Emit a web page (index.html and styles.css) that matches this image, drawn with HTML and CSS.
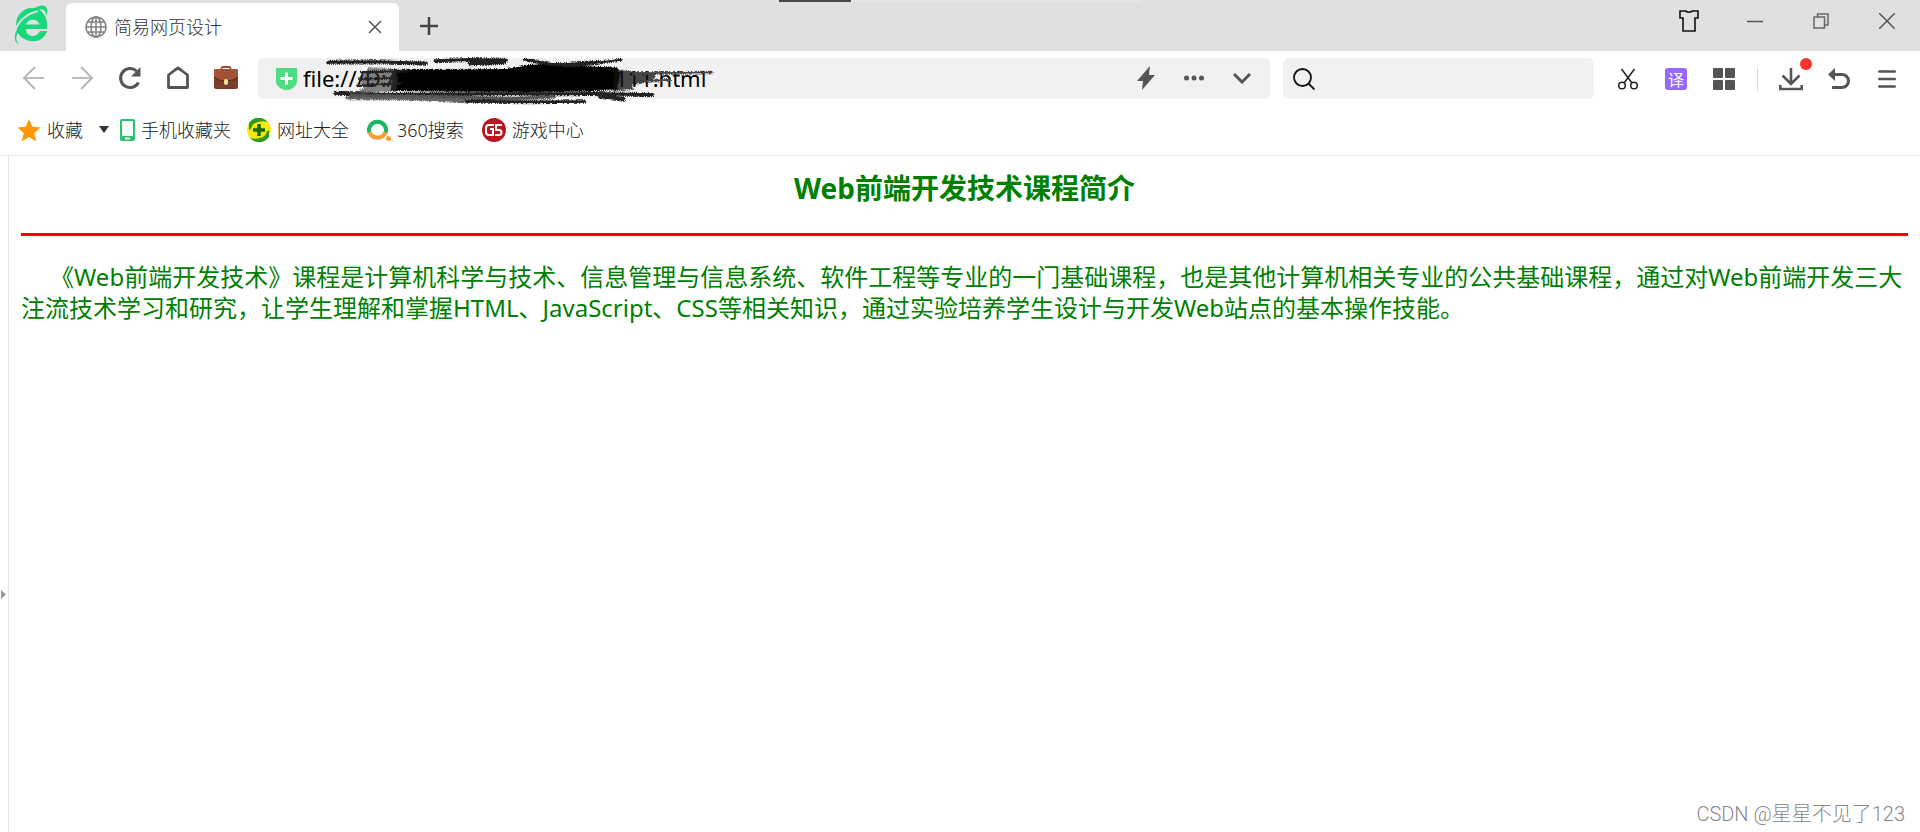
FILE: index.html
```html
<!DOCTYPE html>
<html lang="zh-CN">
<head>
    <meta charset="UTF-8">
    <meta name="viewport" content="width=device-width, initial-scale=1.0">
    <title>简易网页设计</title>
    <link rel="stylesheet" href="styles.css">
</head>
<body>
    <header class="browser">
        <div class="tab-strip">
            <div class="top-bar"><div class="top-bar-handle"></div></div>
            <svg class="logo" width="36" height="40" viewBox="0 0 36 40">
                <path d="M12 19.500 a7 6.500 0 0 1 13.500 0z M2 20 C2 8 12 2 19 3 C29 4 34 12 33 24 H12 C12 32 22 34 26 26 H33 C30 35 23 37 17 36 C8 35 2 29 2 20z" fill="#17d97c" fill-rule="evenodd"/>
                <path d="M1 26 C4 17 12 9 24 6" fill="none" stroke="#e0e0e0" stroke-width="2"/>
                <path d="M15 7 C23 0 32 -2 33 4 C34 7 33 9 32 10 C32 5 29 3 22 6z M6 24 C1 31 1 37 6 39 C0 39 0 32 2 26z" fill="#17d97c"/>
            </svg>
            <div class="tab">
                <svg width="22" height="22" viewBox="0 0 22 22" fill="none" stroke="#808080" stroke-width="1.500">
                    <circle cx="11" cy="11" r="10"/>
                    <ellipse cx="11" cy="11" rx="5" ry="10"/>
                    <path d="M11 1v20M1 11h20M3 6h16M3 16h16"/>
                </svg>
                <span class="tab-title">简易网页设计</span>
                <button class="icon-btn tab-close" aria-label="关闭标签页">
                    <svg width="14" height="14" viewBox="0 0 14 14" stroke="#555" stroke-width="1.500"><path d="M1 1l12 12M13 1L1 13"/></svg>
                </button>
            </div>
            <button class="icon-btn new-tab" aria-label="新建标签页">
                <svg width="18" height="18" viewBox="0 0 18 18" stroke="#444" stroke-width="2.500"><path d="M9 0v18M0 9h18"/></svg>
            </button>
            <div class="window-controls">
                <button class="icon-btn" aria-label="皮肤">
                    <svg width="20" height="22" viewBox="0 0 20 22" fill="none" stroke="#111" stroke-width="1.600"><path d="M1 1h5.500q3.500 2.500 7 0H19v7h-3v13H4V8H1z"/></svg>
                </button>
                <button class="icon-btn" aria-label="最小化">
                    <svg width="16" height="16" viewBox="0 0 16 16" stroke="#555" stroke-width="1.500"><path d="M0 8.500h16"/></svg>
                </button>
                <button class="icon-btn" aria-label="还原">
                    <svg width="16" height="16" viewBox="0 0 16 16" fill="none" stroke="#666" stroke-width="1.500"><path d="M1 4h10.500v11H1zM4.500 4V1H15v11h-3.500"/></svg>
                </button>
                <button class="icon-btn" aria-label="关闭">
                    <svg width="16" height="16" viewBox="0 0 16 16" stroke="#555" stroke-width="1.500"><path d="M0 0l16 16M16 0L0 16"/></svg>
                </button>
            </div>
        </div>

        <div class="toolbar">
            <nav class="nav-buttons">
                <button class="icon-btn" aria-label="后退">
                    <svg width="24" height="24" viewBox="0 0 24 24" fill="none" stroke="#bcbcbc" stroke-width="2.200"><path d="M22 12H2M13 1L2 12l11 11"/></svg>
                </button>
                <button class="icon-btn" aria-label="前进">
                    <svg width="24" height="24" viewBox="0 0 24 24" fill="none" stroke="#bcbcbc" stroke-width="2.200"><path d="M2 12h20M11 1l11 11-11 11"/></svg>
                </button>
                <button class="icon-btn" aria-label="刷新">
                    <svg width="24" height="24" viewBox="0 0 24 24" fill="none" stroke="#555" stroke-width="3"><path d="M20.500 16.500A9.500 9.500 0 1 1 18.500 5"/><path d="M22.500 1v9.500h-9.500z" fill="#555" stroke="none"/></svg>
                </button>
                <button class="icon-btn" aria-label="主页">
                    <svg width="24" height="24" viewBox="0 0 24 24" fill="none" stroke="#555" stroke-width="2.800" stroke-linejoin="round"><path d="M2.500 9L9 4l3-2 3 2 6.500 5v12.500h-19z"/></svg>
                </button>
                <button class="icon-btn" aria-label="工具箱">
                    <svg width="24" height="24" viewBox="0 0 24 24">
                        <path d="M7.500 4V2.500q0-1.500 1.500-1.500h6q1.500 0 1.500 1.500V4" fill="none" stroke="#a04c2b" stroke-width="1.800"/>
                        <rect y="3" width="24" height="20" rx="2" fill="#7b3d29"/>
                        <path d="M0 5q0-2 2-2h20q2 0 2 2v6q-4 4-12 4T0 11z" fill="#a35235"/>
                        <path d="M0 11q4 4 12 4t12-4" fill="none" stroke="#552616"/>
                        <rect x="10" y="13" width="4" height="6" rx="2" fill="#f5dca0"/>
                    </svg>
                </button>
            </nav>

            <div class="address-bar">
                <svg width="21" height="22" viewBox="0 0 21 22"><path d="M0 0h21v13q0 5-5 7.500-5.500 3-11 0Q0 18 0 13z" fill="#4fdc84"/><path d="M10.500 4.500v12M4.500 10.500h12" stroke="#fff" stroke-width="3"/></svg>
                <input class="url" type="text" aria-label="地址" value="file:///D:/　　　　　　　　　　111.html">
                <button class="icon-btn" aria-label="极速模式">
                    <svg width="18" height="24" viewBox="0 0 18 24"><path d="M13 0L0 15h6l-1 9L18 9h-6z" fill="#555"/></svg>
                </button>
                <button class="icon-btn" aria-label="更多">
                    <svg width="20" height="20" viewBox="0 0 20 20" fill="#555"><circle cx="2.500" cy="10" r="2.500"/><circle cx="10" cy="10" r="2.500"/><circle cx="17.500" cy="10" r="2.500"/></svg>
                </button>
                <button class="icon-btn" aria-label="展开">
                    <svg width="18" height="12" viewBox="0 0 18 12" fill="none" stroke="#555" stroke-width="3"><path d="M1 2l8 8 8-8"/></svg>
                </button>
                <!-- pen strokes over the path -->
                <svg class="scribble" width="400" height="50" viewBox="250 45 1200 150" fill="none" stroke="#222" stroke-linecap="round">
                    <filter id="rough"><feTurbulence baseFrequency="0.5" numOctaves="2" seed="4"/><feDisplacementMap in="SourceGraphic" scale="4"/><feGaussianBlur stdDeviation="0.4"/></filter>
                    <g filter="url(#rough)">
                        <path d="M460 86L640 86 800 84 870 72 950 66 1030 76 1130 80 1140 105 1130 148 1000 152 860 155 600 152 450 150z" fill="#050505" stroke="none"/>
                        <path d="M385 82L470 84V152L340 158 375 140 355 116z" fill="#333" fill-opacity=".6" stroke="none"/>
                        <path d="M1120 84L1200 96 1250 100 1235 120 1175 134 1180 146 1120 152z" fill="#111" fill-opacity=".75" stroke="none"/>
                        <path d="M264 65L400 64 556 68M585 61L690 57 798 59M690 70L790 66" stroke-width="12"/>
                        <path d="M852 57L930 70 1000 76 1142 58M960 72L1075 64" stroke-width="9"/>
                        <path d="M362 96L500 90M358 116L470 112M352 135L480 128" stroke-width="7"/>
                        <path d="M1180 98L1300 97 1415 96M1200 122L1290 118" stroke="#444" stroke-width="8"/>
                        <path d="M286 158L420 162 700 160 1020 160M1020 158L1236 163M1080 168L1150 176" stroke-width="12"/>
                        <path d="M322 172L500 174 690 182" stroke="#666" stroke-width="11"/>
                        <path d="M680 182L860 184 1032 183" stroke-width="11"/>
                        <path d="M330 165L580 168 820 174 940 168" stroke="#555" stroke-width="10"/>
                    </g>
                </svg>
            </div>

            <div class="search-bar">
                <svg width="22" height="22" viewBox="0 0 22 22" fill="none" stroke="#111" stroke-width="1.800"><circle cx="9.500" cy="9.500" r="8.500"/><path d="M15.500 15.500l6 6"/></svg>
                <input class="search" type="text" aria-label="搜索">
            </div>

            <div class="tools">
                <button class="icon-btn" aria-label="截图">
                    <svg width="20" height="22" viewBox="0 0 20 22" fill="none" stroke="#222" stroke-width="1.500"><path d="M3.500 1L14 15M16.500 1L6 15"/><circle cx="4" cy="17.500" r="3.300"/><circle cx="16" cy="17.500" r="3.300"/></svg>
                </button>
                <button class="icon-btn translate" aria-label="翻译">译</button>
                <button class="icon-btn" aria-label="扩展">
                    <svg width="22" height="22" viewBox="0 0 22 22" fill="#555"><rect width="10" height="10" rx="1"/><rect x="12" width="10" height="10" rx="1"/><rect y="12" width="10" height="10" rx="1"/><rect x="12" y="12" width="10" height="10" rx="1"/></svg>
                </button>
            </div>
            <div class="tools tools-end">
                <button class="icon-btn download" aria-label="下载">
                    <svg width="24" height="24" viewBox="0 0 24 24" fill="none" stroke="#555" stroke-width="2.600"><path d="M12 1v16M3.500 8.500L12 17l8.500-8.500M1.300 18v4h21.400v-4"/></svg>
                    <span class="dot"></span>
                </button>
                <button class="icon-btn" aria-label="恢复">
                    <svg width="22" height="22" viewBox="0 0 22 22" fill="none" stroke="#555" stroke-width="3"><path d="M4 6.500h10a6.500 6.500 0 0 1 0 13H4"/><path d="M0 6.500L7 0v13z" fill="#555" stroke="none"/></svg>
                </button>
                <button class="icon-btn" aria-label="菜单">
                    <svg width="18" height="18" viewBox="0 0 18 18" stroke="#555" stroke-width="2.600" stroke-linecap="round"><path d="M1.300 1.500h15.400M1.300 9h15.400M1.300 16.500h15.400"/></svg>
                </button>
            </div>
        </div>

        <nav class="bookmarks">
            <a class="bookmark" href="#">
                <svg width="24" height="24" viewBox="0 0 24 24"><path d="M12 1l3.300 7.700 8.200.8-6.200 5.500 1.900 8.200L12 18.900l-7.200 4.300 1.900-8.200L.5 9.500l8.200-.8z" fill="#ff9500"/></svg>
                收藏
            </a>
            <button class="icon-btn favorites-arrow" aria-label="展开收藏">
                <svg width="10" height="7" viewBox="0 0 10 7"><path d="M0 0h10L5 7z" fill="#333"/></svg>
            </button>
            <a class="bookmark" href="#">
                <svg width="15" height="22" viewBox="0 0 15 22"><rect width="15" height="22" rx="2" fill="#33bf72"/><path d="M2 2h11v15H2z" fill="#f2fff6"/><path d="M5 19.500h5" stroke="#fff" stroke-width="2"/></svg>
                手机收藏夹
            </a>
            <a class="bookmark site-link" href="#">
                <svg width="24" height="24" viewBox="0 0 24 24"><circle cx="12" cy="12" r="12" fill="#f8e71c"/><path d="M2 5Q8-3 17 1l4 3q-9-2-12 2T2 12zM22 19q-6 8-15 4l-4-3q9 2 12-2t7-6z" fill="#2e9a1f"/><circle cx="12" cy="12" r="8" fill="#ffe600"/><path d="M12 6v12M6 12h12" stroke="#146b12" stroke-width="3.500"/></svg>
                网址大全
            </a>
            <a class="bookmark site-link" href="#">
                <svg width="24" height="24" viewBox="0 0 24 24" fill="none" stroke-width="4"><path d="M2.500 15A8.500 8.500 0 1 1 18.500 15" stroke="#14b866"/><path d="M2.500 14A8.500 8.500 0 0 0 18.500 14" stroke="#ff9b30"/><circle cx="21.500" cy="20.500" r="2.500" fill="#ff9b30" stroke="none"/></svg>
                360搜索
            </a>
            <a class="bookmark" href="#">
                <svg width="24" height="24" viewBox="0 0 24 24" fill="none" stroke="#fff" stroke-width="2"><circle cx="12" cy="12" r="12" fill="#b91620" stroke="none"/><path d="M12 7H7Q4 7 4 10v4q0 3 3 3h4v-6H8M20 7h-6v5h3q2.500 0 2.500 2.500T17 17h-4"/></svg>
                游戏中心
            </a>
        </nav>
    </header>

    <div class="viewport">
        <aside class="side-handle">
            <svg width="5" height="9" viewBox="0 0 5 9"><path d="M0 0l5 4.500L0 9z" fill="#999"/></svg>
        </aside>
        <main class="page">
            <h1>Web前端开发技术课程简介</h1>
            <hr>
            <p>《Web前端开发技术》课程是计算机科学与技术、信息管理与信息系统、软件工程等专业的一门基础课程，也是其他计算机相关专业的公共基础课程，通过对Web前端开发三大注流技术学习和研究，让学生理解和掌握HTML、JavaScript、CSS等相关知识，通过实验培养学生设计与开发Web站点的基本操作技能。</p>
            <footer class="watermark">CSDN @星星不见了123</footer>
        </main>
    </div>
</body>
</html>
```
FILE: styles.css
```css
* {
    box-sizing: border-box;
}

body {
    margin: 0;
    min-height: 100vh;
    display: flex;
    flex-direction: column;
    background-color: #fff;
    font-family: "Noto Sans", "Noto Sans CJK SC", sans-serif;
}

svg {
    display: block;
    flex: none;
}

.icon-btn {
    display: flex;
    align-items: center;
    justify-content: center;
    flex: none;
    padding: 0;
    border: none;
    background: none;
    cursor: pointer;
}

.browser {
    border-bottom: 1px solid #ebebeb;
}

/* tabs */
.tab-strip {
    position: relative;
    display: flex;
    height: 51px;
    background-color: #e0e0e0;
}

.top-bar {
    position: absolute;
    top: 0;
    left: 779px;
    width: 362px;
    height: 2px;
    background-color: #e6e6e6;
}

.top-bar-handle {
    width: 72px;
    height: 2px;
    background-color: #484848;
}

.logo {
    margin: 5px 16px 0 14px;
}

.tab {
    display: flex;
    align-items: center;
    width: 333px;
    margin-top: 3px;
    padding: 0 17px 0 19px;
    border-radius: 6px 6px 0 0;
    background-color: #fff;
}

.tab-title {
    flex: 1;
    margin-left: 7px;
    font-size: 18px;
    font-weight: 300;
    line-height: 24px;
    color: #333;
}

.new-tab {
    width: 60px;
    height: 51px;
}

.window-controls {
    display: flex;
    margin-left: auto;
}

.window-controls .icon-btn {
    width: 66px;
    height: 42px;
}

/* toolbar */
.toolbar {
    display: flex;
    align-items: center;
    height: 55px;
    padding: 0 9px 0 10px;
}

.nav-buttons {
    display: flex;
}

.nav-buttons .icon-btn {
    width: 48px;
    height: 41px;
    padding-bottom: 2px;
}

.address-bar {
    position: relative;
    display: flex;
    align-items: center;
    flex: 1;
    height: 41px;
    margin-left: 8px;
    padding: 0 4px 0 18px;
    border-radius: 6px;
    background-color: #f1f1f1;
}

.address-bar .icon-btn {
    width: 48px;
    height: 41px;
    padding-bottom: 2px;
}

.url,
.search {
    flex: 1;
    min-width: 0;
    height: 36px;
    padding: 0 6px 4px;
    border: none;
    outline: none;
    background: none;
    font-family: inherit;
    font-size: 22px;
    color: #000;
}

.scribble {
    position: absolute;
    top: -3px;
    left: 65px;
    pointer-events: none;
}

.search-bar {
    display: flex;
    align-items: center;
    width: 311px;
    height: 41px;
    margin-left: 13px;
    padding-left: 10px;
    border-radius: 6px;
    background-color: #f1f1f1;
}

.tools {
    display: flex;
    align-items: center;
    margin-left: 10px;
    padding-right: 9px;
}

.tools .icon-btn {
    width: 48px;
    height: 24px;
}

.tools .translate {
    width: 22px;
    height: 22px;
    margin: 0 13px;
    border-radius: 3px;
    background-color: #9668ff;
    font-family: "Noto Sans CJK SC", sans-serif;
    font-size: 16px;
    line-height: 22px;
    color: #fff;
}

.tools-end {
    margin-left: 0;
    padding: 0 0 0 9px;
    border-left: 1px solid #d8d8d8;
}

.download {
    position: relative;
}

.dot {
    position: absolute;
    top: -9px;
    right: 3px;
    width: 12px;
    height: 12px;
    border-radius: 50%;
    background-color: #fa3232;
}

/* bookmarks */
.bookmarks {
    display: flex;
    align-items: center;
    height: 49px;
    padding: 0 0 2px 17px;
}

.bookmark {
    display: flex;
    align-items: center;
    gap: 6px;
    margin-right: 16px;
    font-size: 18px;
    font-weight: 300;
    line-height: 24px;
    color: #222;
    text-decoration: none;
}

.site-link {
    margin-right: 18px;
}

.favorites-arrow {
    margin-right: 11px;
}

/* page */
.viewport {
    display: flex;
    flex: 1;
}

.side-handle {
    display: flex;
    align-items: center;
    width: 9px;
    padding: 200px 0 0 1px;
    border-right: 1px solid #e4e4e4;
}

.page {
    display: flex;
    flex-direction: column;
    flex: 1;
    padding: 12px 12px 6px;
    color: green;
}

h1 {
    margin: 0;
    font-size: 28px;
    line-height: 40px;
    text-align: center;
}

hr {
    width: 100%;
    height: 3px;
    margin: 25px 0;
    border: none;
    background-color: red;
}

p {
    margin: 0;
    font-size: 24px;
    line-height: 31px;
    text-indent: 29px;
}

.watermark {
    margin-top: auto;
    padding-right: 3px;
    font-family: Roboto, "Noto Sans CJK SC", sans-serif;
    font-size: 20px;
    font-weight: 300;
    line-height: 24px;
    text-align: right;
    color: #888;
}
```
